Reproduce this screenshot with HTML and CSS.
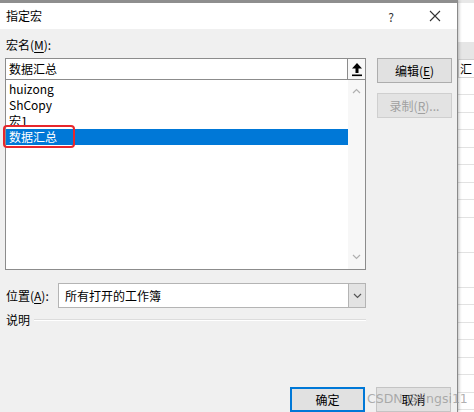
FILE: index.html
```html
<!DOCTYPE html>
<html lang="zh-CN">
<head>
    <meta charset="UTF-8">
    <meta name="viewport" content="width=device-width, initial-scale=1.0">
    <title>指定宏</title>
    <link rel="stylesheet" href="styles.css">
</head>
<body>
    <div class="screen">
        <div class="dialog">
            <div class="titlebar">
                <span class="title">指定宏</span>
                <span class="help">?</span>
                <span class="close">
                    <svg width="12" height="12" viewBox="0 0 12 12"><path d="M1 1 L11 11 M11 1 L1 11" stroke="#333" stroke-width="1.1" fill="none"/></svg>
                </span>
            </div>

            <div class="content">
                <div class="main">
                    <div class="label">宏名(<u>M</u>):</div>
                    <div class="name-row">
                        <div class="name-input">数据汇总</div>
                        <div class="up-btn">
                            <svg width="12" height="15" viewBox="0 0 12 15">
                                <path d="M6 1 L11 6.5 L7.5 6.5 L7.5 11 L4.5 11 L4.5 6.5 L1 6.5 Z" fill="#000"/>
                                <rect x="1" y="12.5" width="10" height="1.6" fill="#000"/>
                            </svg>
                        </div>
                    </div>
                    <div class="list">
                        <ul class="items">
                            <li>huizong</li>
                            <li>ShCopy</li>
                            <li>宏1</li>
                            <li class="selected"><span class="mark">数据汇总</span></li>
                        </ul>
                        <div class="scrollbar">
                            <svg width="9" height="6" viewBox="0 0 9 6"><path d="M1 5 L4.5 1.5 L8 5" stroke="#b0b0b0" stroke-width="1.2" fill="none"/></svg>
                            <svg width="9" height="6" viewBox="0 0 9 6"><path d="M1 1 L4.5 4.5 L8 1" stroke="#b0b0b0" stroke-width="1.2" fill="none"/></svg>
                        </div>
                    </div>

                    <div class="location">
                        <span class="loc-label">位置(<u>A</u>):</span>
                        <div class="combo">
                            <span class="combo-text">所有打开的工作簿</span>
                            <span class="combo-arrow">
                                <svg width="9" height="6" viewBox="0 0 9 6"><path d="M1 1 L4.5 4.5 L8 1" stroke="#555" stroke-width="1.2" fill="none"/></svg>
                            </span>
                        </div>
                    </div>

                    <div class="desc">
                        <span>说明</span>
                        <span class="groove"></span>
                    </div>
                </div>

                <div class="side">
                    <button class="btn">编辑(<u>E</u>)</button>
                    <button class="btn disabled">录制(<u>R</u>)...</button>
                </div>
            </div>

            <div class="footer">
                <button class="btn default">确定</button>
                <button class="btn cancel">取消</button>
            </div>
        </div>

        <div class="sheet">
            <div class="sheet-head"></div>
            <div class="sheet-cell">汇</div>
            <div class="sheet-rows"></div>
        </div>

        <div class="watermark">CSDN @lingsi11</div>
    </div>
</body>
</html>
```

FILE: styles.css
```css
body {
    margin: 0;
    font-family: "Noto Sans CJK SC", "Noto Sans", sans-serif;
    font-size: 12px;
    color: #000;
}

.screen {
    position: relative;
    width: 474px;
    height: 412px;
    overflow: hidden;
    display: flex;
    background: #fff;
}

.dialog {
    width: 458px;
    height: 412px;
    flex-shrink: 0;
    display: flex;
    flex-direction: column;
    background: #f0f0f0;
    border-top: 3px solid #8e8e8e;
    border-right: 1px solid #8a8a8a;
    box-sizing: border-box;
    box-shadow: 1px 0 3px rgba(0,0,0,0.25);
    z-index: 1;
}

.titlebar {
    height: 26px;
    background: #fff;
    display: flex;
    align-items: center;
    padding-left: 6px;
    flex-shrink: 0;
}

.title {
    flex: 1;
    line-height: 16px;
}

.help {
    width: 20px;
    text-align: center;
    color: #333;
    margin-right: 24px;
}

.close {
    width: 20px;
    display: flex;
    justify-content: center;
    margin-right: 12px;
}

.content {
    display: flex;
    padding: 8px 0 0 5px;
}

.main {
    width: 361px;
}

u {
    text-decoration-thickness: 1px;
    text-underline-offset: 2px;
}

.label {
    line-height: 16px;
    padding-left: 1px;
    margin-bottom: 5px;
}

.name-row {
    display: flex;
    height: 22px;
}

.name-input {
    flex: 1;
    background: #fff;
    border: 1px solid #8c8c8c;
    border-right: none;
    padding-left: 3px;
    line-height: 20px;
}

.up-btn {
    width: 19px;
    box-sizing: border-box;
    border: 1px solid #8c8c8c;
    background: #f8f8f8;
    display: flex;
    align-items: center;
    justify-content: center;
}

.list {
    height: 190px;
    background: #fff;
    border: 1px solid #8c8c8c;
    border-top: none;
    box-sizing: border-box;
    display: flex;
}

.items {
    list-style: none;
    margin: 0;
    padding: 1px 0 0;
    flex: 1;
}

.items li {
    line-height: 16px;
    height: 16px;
    padding-left: 3px;
}

.items li.selected {
    background: #0078d7;
    color: #fff;
}

.mark {
    position: relative;
}

.mark::after {
    content: "";
    position: absolute;
    left: -6px;
    right: -18px;
    top: -3px;
    bottom: -3px;
    border: 2px solid #e8262b;
    border-radius: 4px;
}

.scrollbar {
    width: 17px;
    background: #f7f7f7;
    display: flex;
    flex-direction: column;
    justify-content: space-between;
    align-items: center;
    padding: 8px 0 9px;
    box-sizing: border-box;
}

.location {
    display: flex;
    align-items: center;
    margin-top: 13px;
    height: 25px;
}

.loc-label {
    width: 52px;
    padding-left: 1px;
}

.combo {
    flex: 1;
    height: 25px;
    box-sizing: border-box;
    border: 1px solid #b4b4b4;
    background: #fff;
    display: flex;
    align-items: center;
}

.combo-text {
    flex: 1;
    padding-left: 6px;
}

.combo-arrow {
    width: 16px;
    height: 100%;
    background: #e3e3e3;
    border-left: 1px solid #b4b4b4;
    display: flex;
    align-items: center;
    justify-content: center;
}

.desc {
    display: flex;
    align-items: center;
    margin-top: 5px;
    line-height: 14px;
    padding-left: 1px;
}

.groove {
    flex: 1;
    margin-left: 4px;
    border-top: 1px solid #dcdcdc;
    border-bottom: 1px solid #fff;
}

.side {
    width: 75px;
    margin-left: 11px;
    margin-top: 21px;
    display: flex;
    flex-direction: column;
    gap: 10px;
}

.btn {
    width: 75px;
    height: 25px;
    background: #e1e1e1;
    border: 1px solid #adadad;
    font-family: inherit;
    font-size: 12px;
    color: #000;
    padding: 0;
}

.btn.disabled {
    background: #e3e3e3;
    border-color: #cfcfcf;
    color: #a0a0a0;
}

.btn.default {
    border: 2px solid #0078d7;
}

.btn.cancel {
    border-color: #c4c4c4;
}

.footer {
    margin-top: auto;
    display: flex;
    justify-content: flex-end;
    gap: 11px;
    padding-right: 6px;
    height: 25px;
    flex-shrink: 0;
}

.sheet {
    flex: 1;
    display: flex;
    flex-direction: column;
    border-top: 3px solid #e8e8e8;
}

.sheet-head {
    margin-top: 39px;
    height: 17px;
    background: #e6e6e6;
    border-bottom: 1px solid #cfcfcf;
}

.sheet-cell {
    height: 17px;
    line-height: 17px;
    border-bottom: 1px solid #d4d4d4;
    border-left: 1px solid #d4d4d4;
    padding-left: 1px;
    font-size: 12px;
}

.sheet-rows {
    flex: 1;
    background: repeating-linear-gradient(to bottom, #fff 0, #fff 16.5px, #e2e2e2 16.5px, #e2e2e2 17.5px);
}

.watermark {
    position: absolute;
    left: 367px;
    top: 391px;
    font-family: "DejaVu Sans", sans-serif;
    font-size: 12.5px;
    color: rgba(150,150,150,0.75);
    z-index: 2;
    white-space: nowrap;
}
```
